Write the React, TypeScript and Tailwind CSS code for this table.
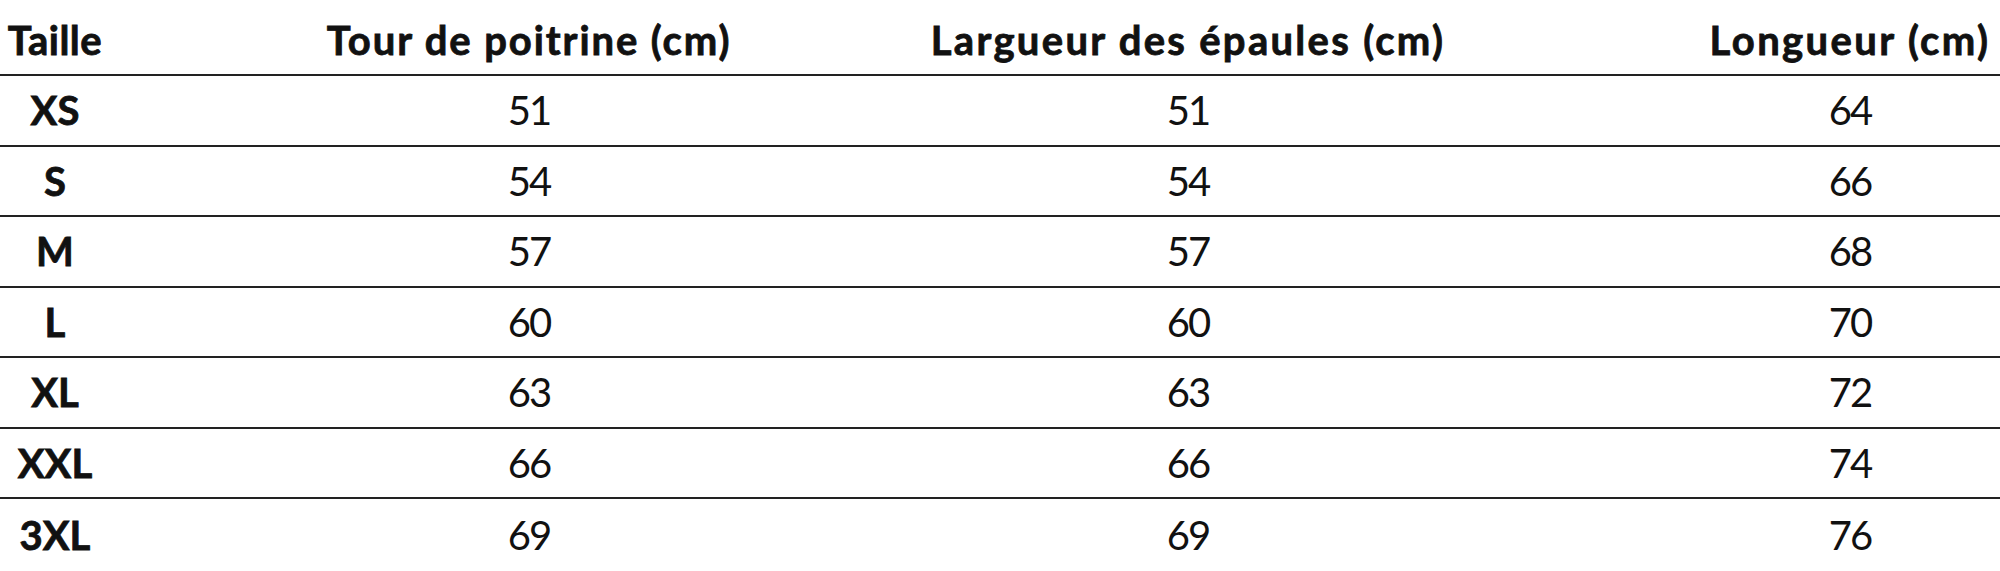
import React from 'react';

const rows = [
  { size: 'XS', chest: 51, shoulders: 51, length: 64 },
  { size: 'S', chest: 54, shoulders: 54, length: 66 },
  { size: 'M', chest: 57, shoulders: 57, length: 68 },
  { size: 'L', chest: 60, shoulders: 60, length: 70 },
  { size: 'XL', chest: 63, shoulders: 63, length: 72 },
  { size: 'XXL', chest: 66, shoulders: 66, length: 74 },
  { size: '3XL', chest: 69, shoulders: 69, length: 76 },
];

const grid = 'grid grid-cols-[110px_838px_480px_272px_300px] items-center';
const cell = 'flex justify-center whitespace-nowrap';
const heavy = '[-webkit-text-stroke:0.8px_#111]';

const App = () => {
  return (
    <div className="w-[2000px] h-[571px] bg-white text-[#111] font-['Lato',sans-serif] overflow-hidden">
      <div className={`${grid} h-[76px] pt-[5px] border-b-2 border-[#222] text-[40px] font-bold ${heavy}`}>
        <div className={`${cell} tracking-[0.5px]`}>Taille</div>
        <div className={`${cell} tracking-[1.9px]`}>Tour de poitrine (cm)</div>
        <div className={`${cell} tracking-[2.3px]`}>Largueur des épaules (cm)</div>
        <div className={`${cell} tracking-[2.4px] col-start-5`}>Longueur (cm)</div>
      </div>

      {rows.map((row, i) => (
        <div
          key={row.size}
          className={`${grid} ${i < rows.length - 1 ? 'h-[70.5px] border-b-2 border-[#222]' : 'h-[71px]'} text-[40px]`}
        >
          <div className={`${cell} font-bold ${heavy}`}>{row.size}</div>
          <div className={`${cell} font-normal tracking-[-2px]`}>{row.chest}</div>
          <div className={`${cell} font-normal tracking-[-2px]`}>{row.shoulders}</div>
          <div className={`${cell} font-normal tracking-[-2px] col-start-5`}>{row.length}</div>
        </div>
      ))}
    </div>
  );
};

export default App;
